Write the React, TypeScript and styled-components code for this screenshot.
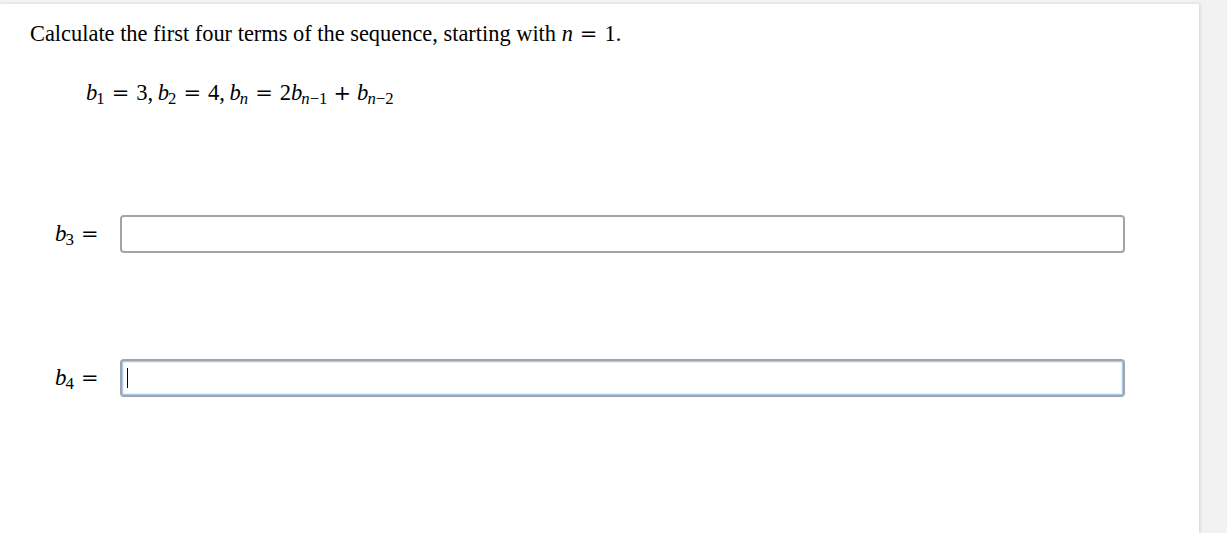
import styled, { createGlobalStyle } from "styled-components";

const GlobalStyle = createGlobalStyle`
  html, body {
    margin: 0;
    padding: 0;
    background: #f2f2f2;
  }
  body {
    font-family: "Liberation Serif", "Times New Roman", serif;
    color: #000;
  }
`;

type Answer = { index: number; focused: boolean };

const answers: Answer[] = [
  { index: 3, focused: false },
  { index: 4, focused: true },
];

export default function App() {
  return (
    <>
      <GlobalStyle />
      <Page>
        <Panel>
          <Prompt>
            Calculate the first four terms of the sequence, starting with{" "}
            <Var>n</Var>
            <Rel>=</Rel>1.
          </Prompt>

          <Formula>
            <Var>b</Var>
            <Sub>1</Sub>
            <Rel>=</Rel>3,<Thin />
            <Var>b</Var>
            <Sub>2</Sub>
            <Rel>=</Rel>4,<Thin />
            <Var>b</Var>
            <Sub>
              <Var>n</Var>
            </Sub>
            <Rel>=</Rel>2<Var>b</Var>
            <Sub>
              <Var>n</Var>−1
            </Sub>
            <Bin>+</Bin>
            <Var>b</Var>
            <Sub>
              <Var>n</Var>−2
            </Sub>
          </Formula>

          <AnswerList>
            {answers.map((a) => (
              <AnswerRow key={a.index}>
                <Label>
                  <Var>b</Var>
                  <Sub>{a.index}</Sub>
                  <Rel>=</Rel>
                </Label>
                <Field>
                  <Input type="text" readOnly $focused={a.focused} />
                  {a.focused && <Caret />}
                </Field>
              </AnswerRow>
            ))}
          </AnswerList>
        </Panel>
      </Page>
    </>
  );
}

/* ============ styled-components ============ */

const Page = styled.div`
  padding-top: 4px;
  min-height: 529px;
`;

const Panel = styled.div`
  width: 1199px;
  min-height: 529px;
  box-sizing: border-box;
  background: #ffffff;
  box-shadow: 1px 0 3px rgba(0, 0, 0, 0.14);
  padding: 17px 0 0 30px;
`;

const Prompt = styled.div`
  font-size: 22.4px;
  line-height: normal;
  white-space: nowrap;
`;

const Formula = styled.div`
  margin: 33px 0 0 56px;
  font-size: 22.6px;
  line-height: normal;
  white-space: nowrap;
`;

const Var = styled.i`
  font-style: italic;
`;

const Sub = styled.sub`
  font-size: 74%;
  vertical-align: -0.22em;
  line-height: 0;
  margin-left: -1px;
`;

/* MathJax-like relation: wider "=" than the text font gives */
const Rel = styled.span`
  font-family: "DejaVu Serif", "Liberation Serif", serif;
  font-size: 21px;
  margin: 0 7px;
`;

const Bin = styled.span`
  font-family: "DejaVu Serif", "Liberation Serif", serif;
  font-size: 21px;
  margin: 0 6px;
`;

const Thin = styled.span`
  display: inline-block;
  width: 0.2em;
`;

const AnswerList = styled.div`
  margin-top: 109px;
  display: flex;
  flex-direction: column;
  gap: 106px;
`;

const AnswerRow = styled.div`
  display: flex;
  align-items: center;
  padding-left: 25px;
`;

const Label = styled.div`
  width: 65px;
  font-size: 23px;
  white-space: nowrap;
`;

const Field = styled.div`
  position: relative;
  width: 1005px;
`;

const Input = styled.input<{ $focused: boolean }>`
  display: block;
  width: 100%;
  height: 38px;
  box-sizing: border-box;
  border: 2px solid #a4a4a4;
  border-radius: 4px;
  background: #ffffff;
  padding: 0 6px;
  font-family: inherit;
  font-size: 18px;
  outline: none;
  box-shadow: ${({ $focused }) =>
    $focused ? "inset 0 0 0 1px #a9cdf2, inset 0 0 0 2px #e3effb" : "none"};
`;

const Caret = styled.span`
  position: absolute;
  left: 7px;
  top: 9px;
  width: 1px;
  height: 20px;
  background: #000;
`;
